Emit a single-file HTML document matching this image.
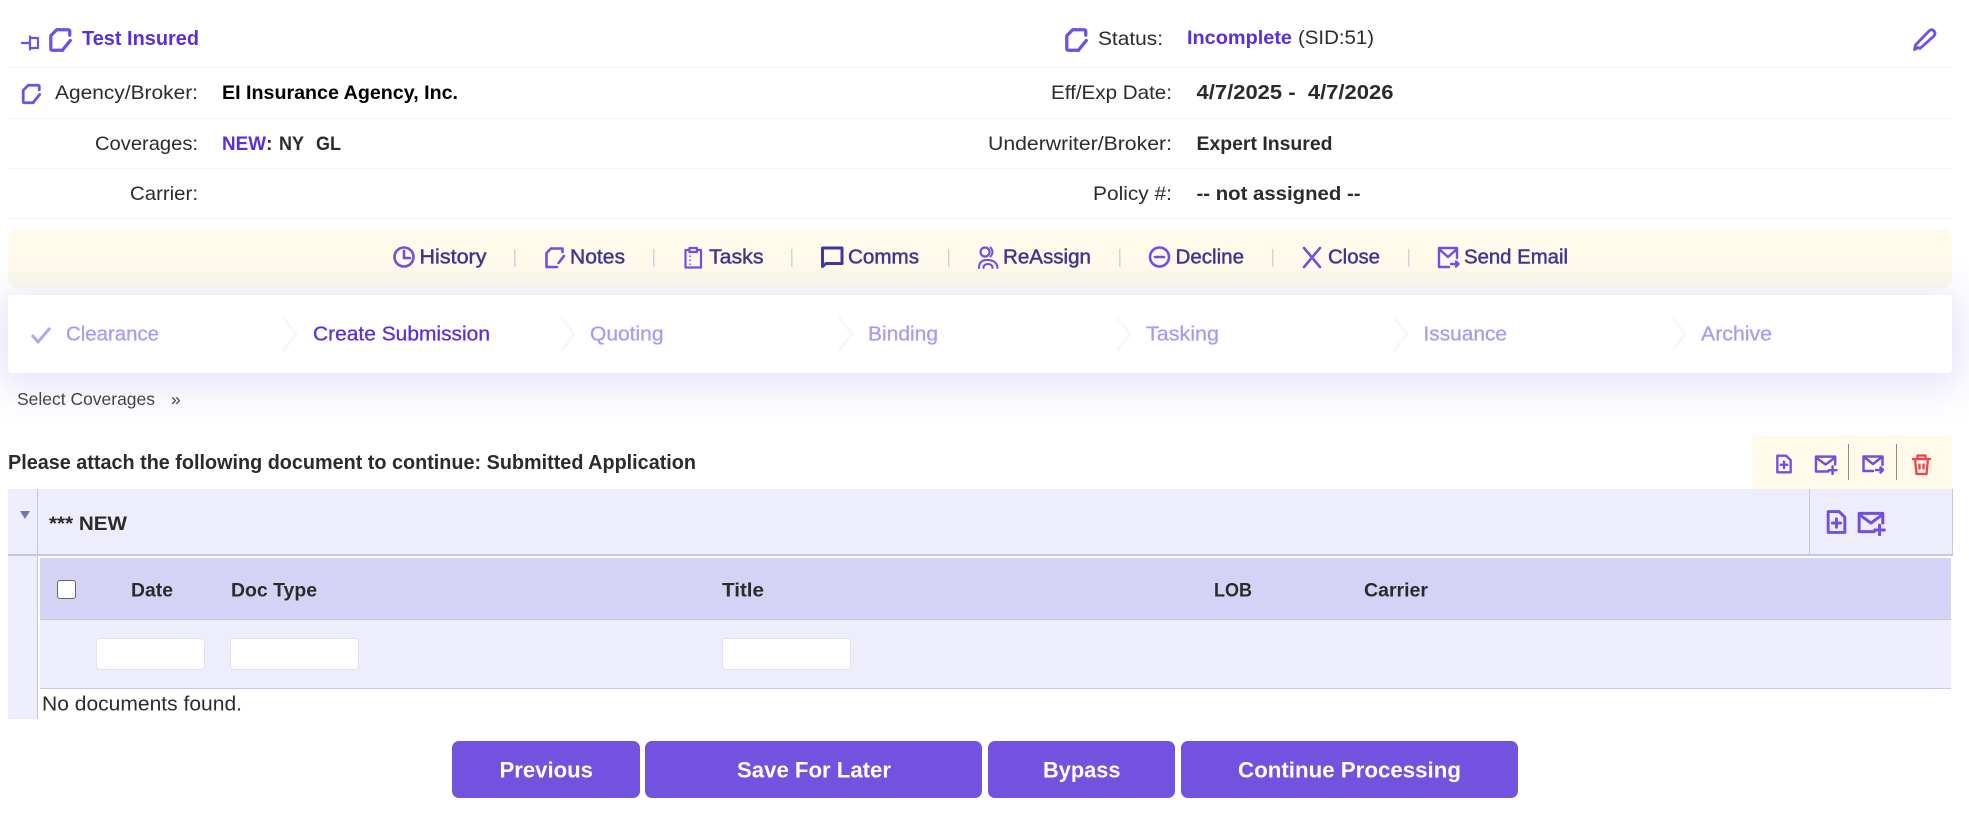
<!DOCTYPE html>
<html><head><meta charset="utf-8"><title>Submission</title>
<style>
html,body{margin:0;padding:0;background:#fff;}
body{width:1969px;height:833px;position:relative;overflow:hidden;font-family:"Liberation Sans",sans-serif;}
.b{position:absolute;box-sizing:border-box;}
svg{position:absolute;left:0;top:0;filter:blur(.3px);}
text{font-family:"Liberation Sans",sans-serif;font-size:19.5px;fill:#2b2b2b;}
.bd{font-weight:700}
.p{fill:#5a2fd8}
.n{fill:#3e358f;font-size:20.5px;stroke:#3e358f;stroke-width:.45px;}
.s{fill:#ab9bf0;font-size:20.5px;stroke:#ab9bf0;stroke-width:.3px;}
.k{fill:#000}
.i{fill:none;stroke:#6f50e2;stroke-width:2.6;stroke-linejoin:round;stroke-linecap:round;}
.w{fill:#fff;font-weight:700;font-size:22.5px;}
</style></head>
<body>
<div class="b" style="left:8px;top:67px;width:1944px;height:1px;background:#f3f3f3"></div>
<div class="b" style="left:8px;top:118px;width:1944px;height:1px;background:#f3f3f3"></div>
<div class="b" style="left:8px;top:168px;width:1944px;height:1px;background:#f3f3f3"></div>
<div class="b" style="left:8px;top:218px;width:1944px;height:1px;background:#f3f3f3"></div>

<div class="b" style="left:8px;top:295px;width:1944px;height:78px;background:#fff;border-radius:4px;box-shadow:0 6px 40px 8px rgba(120,115,225,.2)"></div>
<div class="b" style="left:8px;top:229px;width:1944px;height:59px;border-radius:10px;background:linear-gradient(#fffaea 0,#fffaea 50%,#f8f5ea 88%,#f2f1ee 100%)"></div>

<div class="b" style="left:1752px;top:436px;width:200px;height:53px;background:#fffaea;border-radius:4px 4px 0 0"></div>
<div class="b" style="left:8px;top:489px;width:1945px;height:67px;background:#eeedfc;border-bottom:2px solid #c8c6e6;border-right:1px solid #c8c6e6"></div>
<div class="b" style="left:8px;top:556px;width:30px;height:163px;background:#eeedfc"></div>
<div class="b" style="left:37px;top:489px;width:1px;height:230px;background:#c8c6e6"></div>
<div class="b" style="left:1809px;top:489px;width:1px;height:66px;background:#c8c6e6"></div>
<div class="b" style="left:40px;top:558px;width:1911px;height:62px;background:#d4d3f6;border-bottom:1px solid #c6c4ea"></div>
<div class="b" style="left:40px;top:620px;width:1911px;height:69px;background:#eeedfc;border-bottom:1px solid #c8c6e6"></div>
<div class="b" style="left:96px;top:638px;width:109px;height:32px;background:#fff;border:1px solid #e2e2ee;border-radius:4px"></div>
<div class="b" style="left:230px;top:638px;width:129px;height:32px;background:#fff;border:1px solid #e2e2ee;border-radius:4px"></div>
<div class="b" style="left:722px;top:638px;width:129px;height:32px;background:#fff;border:1px solid #e2e2ee;border-radius:4px"></div>
<div class="b" style="left:57px;top:580px;width:19px;height:19px;background:#fff;border:1.5px solid #666;border-radius:3px"></div>

<div class="b" style="left:452px;top:741px;width:188px;height:57px;background:#7352e0;border-radius:7px"></div>
<div class="b" style="left:645px;top:741px;width:337px;height:57px;background:#7352e0;border-radius:7px"></div>
<div class="b" style="left:988px;top:741px;width:187px;height:57px;background:#7352e0;border-radius:7px"></div>
<div class="b" style="left:1181px;top:741px;width:337px;height:57px;background:#7352e0;border-radius:7px"></div>

<svg width="1969" height="833" viewBox="0 0 1969 833">
<defs>
<symbol id="note" viewBox="0 0 24 24" overflow="visible"><path class="i" d="M9 2.500H19.500Q21 2.500 21 4V7.500M9 2.500L3.500 8V20Q3.500 21.500 5 21.500H14.500M21.500 12.500L15 20.500" style="stroke-width:3"/></symbol>
<symbol id="docp" viewBox="0 0 24 24"><path class="i" d="M4 2H14.500L20 7.500V22H4ZM12 9V17M8 13H16" style="stroke-width:2.800"/></symbol>
<symbol id="mailp" viewBox="0 0 27 24"><path class="i" d="M16 20H2V3H24V12M2 4L13 12L24 4M21 14V23M16.500 18.500H25.500" style="stroke-width:2.800"/></symbol>
<symbol id="maila" viewBox="0 0 22 20"><path class="i" d="M11 16H1.500V1.500H20.500V10M2 2L11 9L20 2M14 15H21M18.500 12.500L21 15L18.500 17.500" style="stroke-width:2.500"/></symbol>
</defs>

<!-- top icons -->
<path class="i" d="M22 43H30M30 38H38V48H30ZM30 36.500V49.500" style="stroke-width:2.200"/>
<use href="#note" x="47" y="27" width="26" height="26"/>
<use href="#note" x="20" y="83" width="22" height="22"/>
<use href="#note" x="1063" y="27" width="26" height="26"/>
<path class="i" d="M1918 47.500L1914.500 49.500L1915.500 45L1929 31Q1931.500 28.500 1934 31Q1936 33.500 1934 36L1920 48.500Z" style="stroke-width:2.800"/>

<!-- info rows -->
<text class="bd p" x="82" y="45" textLength="117" lengthAdjust="spacingAndGlyphs" style="font-size:20px">Test Insured</text>
<text x="55" y="99" textLength="143" lengthAdjust="spacingAndGlyphs">Agency/Broker:</text>
<text class="bd k" x="222" y="99" textLength="236" lengthAdjust="spacingAndGlyphs">EI Insurance Agency, Inc.</text>
<text x="95" y="150" textLength="103" lengthAdjust="spacingAndGlyphs">Coverages:</text>
<text class="bd p" x="222" y="150" textLength="44" lengthAdjust="spacingAndGlyphs">NEW</text>
<text class="bd" x="266" y="150">:</text>
<text class="bd" x="279" y="150" textLength="25" lengthAdjust="spacingAndGlyphs">NY</text>
<text class="bd" x="316" y="150" textLength="25" lengthAdjust="spacingAndGlyphs">GL</text>
<text x="130" y="200" textLength="68" lengthAdjust="spacingAndGlyphs">Carrier:</text>

<text x="1098" y="45" textLength="65" lengthAdjust="spacingAndGlyphs">Status:</text>
<text class="bd p" x="1187" y="44" textLength="105" lengthAdjust="spacingAndGlyphs">Incomplete</text>
<text x="1298" y="44" textLength="76" lengthAdjust="spacingAndGlyphs">(SID:51)</text>
<text x="1051" y="99" textLength="121" lengthAdjust="spacingAndGlyphs">Eff/Exp Date:</text>
<text class="bd" x="1196.500" y="99" textLength="197" lengthAdjust="spacingAndGlyphs" xml:space="preserve" style="font-size:20.500px">4/7/2025 -  4/7/2026</text>
<text x="988" y="150" textLength="184" lengthAdjust="spacingAndGlyphs">Underwriter/Broker:</text>
<text class="bd" x="1196.500" y="150" textLength="136" lengthAdjust="spacingAndGlyphs">Expert Insured</text>
<text x="1093" y="200" textLength="79" lengthAdjust="spacingAndGlyphs">Policy #:</text>
<text class="bd" x="1196.500" y="200" textLength="164" lengthAdjust="spacingAndGlyphs">-- not assigned --</text>

<!-- action bar -->
<circle class="i" cx="404" cy="257" r="9.500"/><path class="i" d="M404 251V258H410"/>
<path class="i" d="M551 248.500H562.500V252M551 248.500L546.500 253V267H557M564 256L558.500 263"/>
<path class="i" d="M689 250H685.500V267.500H701V250H697.500M689.500 248H697V252H689.500Z" style="stroke-width:2.200"/>
<path class="i" d="M690 256V256.500M690 260V260.500M690 264V264.500" style="stroke-width:1.500"/>
<path d="M822.500 248H842V263.500H826L822.500 266.500Z" fill="none" stroke="#3f38a4" stroke-width="3" stroke-linejoin="round"/>
<circle class="i" cx="985" cy="252" r="4.500" style="stroke-width:2.200"/>
<path class="i" d="M990.500 247.500Q994.500 252 990.500 256.500M979 268Q979 260 987 260Q997 260 997.500 268M983.500 268Q983.500 264 988 264Q992.500 264 992.500 268" style="stroke-width:2"/>
<circle class="i" cx="1159.500" cy="257" r="9.500"/><path class="i" d="M1155 257H1164"/>
<path class="i" d="M1304 248L1320 267M1320 248L1304 267"/>
<path class="i" d="M1449 267H1439V248H1457V258M1439 249L1448 257L1457 249M1451 264H1458.500M1456 261.500L1458.500 264L1456 266.500" style="stroke-width:2.400"/>
<g fill="#d3d3dc">
<rect x="514" y="249" width="1.500" height="18"/><rect x="653" y="249" width="1.500" height="18"/><rect x="791" y="249" width="1.500" height="18"/><rect x="948" y="249" width="1.500" height="18"/><rect x="1119" y="249" width="1.500" height="18"/><rect x="1272" y="249" width="1.500" height="18"/><rect x="1408" y="249" width="1.500" height="18"/>
</g>
<text class="n" x="419.500" y="263.500" textLength="67" lengthAdjust="spacingAndGlyphs">History</text>
<text class="n" x="570" y="263.500" textLength="55" lengthAdjust="spacingAndGlyphs">Notes</text>
<text class="n" x="709" y="263.500" textLength="54.500" lengthAdjust="spacingAndGlyphs">Tasks</text>
<text class="n" x="848" y="263.500" textLength="71" lengthAdjust="spacingAndGlyphs">Comms</text>
<text class="n" x="1003" y="263.500" textLength="88" lengthAdjust="spacingAndGlyphs">ReAssign</text>
<text class="n" x="1175.500" y="263.500" textLength="68.500" lengthAdjust="spacingAndGlyphs">Decline</text>
<text class="n" x="1328" y="263.500" textLength="52" lengthAdjust="spacingAndGlyphs">Close</text>
<text class="n" x="1464" y="263.500" textLength="104" lengthAdjust="spacingAndGlyphs">Send Email</text>

<!-- stepper -->
<path d="M32 335L38 342L50 328" fill="none" stroke="#b3a5f2" stroke-width="3"/>
<text class="s" x="66" y="340.500" textLength="93" lengthAdjust="spacingAndGlyphs">Clearance</text>
<text class="s" x="313" y="340.500" textLength="177" lengthAdjust="spacingAndGlyphs" style="fill:#5a2fd8;stroke:#5a2fd8">Create Submission</text>
<text class="s" x="590" y="340.500" textLength="73.500" lengthAdjust="spacingAndGlyphs">Quoting</text>
<text class="s" x="868" y="340.500" textLength="70" lengthAdjust="spacingAndGlyphs">Binding</text>
<text class="s" x="1146" y="340.500" textLength="73" lengthAdjust="spacingAndGlyphs">Tasking</text>
<text class="s" x="1423.500" y="340.500" textLength="83.500" lengthAdjust="spacingAndGlyphs">Issuance</text>
<text class="s" x="1701" y="340.500" textLength="71" lengthAdjust="spacingAndGlyphs">Archive</text>
<g fill="none" stroke="#f7f7f9" stroke-width="3">
<path d="M283 317L296 334L283 351"/><path d="M561 317L574 334L561 351"/><path d="M839 317L852 334L839 351"/><path d="M1117 317L1130 334L1117 351"/><path d="M1394 317L1407 334L1394 351"/><path d="M1672 317L1685 334L1672 351"/>
</g>

<text x="17" y="405" textLength="138" lengthAdjust="spacingAndGlyphs" style="font-size:17.500px;fill:#444">Select Coverages</text>
<text x="171" y="405" style="font-size:17.500px;fill:#444">»</text>

<text class="bd" x="8" y="469" textLength="688" lengthAdjust="spacingAndGlyphs" style="font-size:20px">Please attach the following document to continue: Submitted Application</text>

<!-- toolbar icons -->
<use href="#docp" x="1774" y="454" width="20" height="20"/>
<use href="#mailp" x="1814" y="454" width="24" height="21"/>
<use href="#maila" x="1862" y="455" width="22" height="20"/>
<rect x="1848" y="444" width="1" height="36" fill="#8a8a8a"/>
<rect x="1896" y="444" width="1" height="36" fill="#8a8a8a"/>
<path d="M1912 459H1931M1915 459L1916.500 474H1926.500L1928 459M1917.500 459V455.500H1925.500V459M1919.500 463.500V469.500M1923.500 463.500V469.500" fill="none" stroke="#f2404a" stroke-width="2.300" stroke-linejoin="round"/>
<use href="#docp" x="1824" y="509" width="25" height="26"/>
<use href="#mailp" x="1857" y="510" width="29" height="26"/>

<path d="M20 511H30L25 519Z" fill="#7076b4"/>
<text class="bd" x="49" y="530" textLength="78" lengthAdjust="spacingAndGlyphs">*** NEW</text>

<text class="bd" x="131" y="596.500" textLength="42" lengthAdjust="spacingAndGlyphs">Date</text>
<text class="bd" x="231" y="596.500" textLength="86" lengthAdjust="spacingAndGlyphs">Doc Type</text>
<text class="bd" x="722" y="596.500" textLength="42" lengthAdjust="spacingAndGlyphs">Title</text>
<text class="bd" x="1214" y="596.500" textLength="38" lengthAdjust="spacingAndGlyphs">LOB</text>
<text class="bd" x="1364" y="596.500" textLength="64" lengthAdjust="spacingAndGlyphs">Carrier</text>
<text x="42" y="710.500" textLength="200" lengthAdjust="spacingAndGlyphs" style="font-size:20.500px">No documents found.</text>

<text class="w" x="499.500" y="777.500" textLength="93.500" lengthAdjust="spacingAndGlyphs">Previous</text>
<text class="w" x="737" y="777.500" textLength="154" lengthAdjust="spacingAndGlyphs">Save For Later</text>
<text class="w" x="1043" y="777.500" textLength="77.500" lengthAdjust="spacingAndGlyphs">Bypass</text>
<text class="w" x="1238" y="777.500" textLength="223" lengthAdjust="spacingAndGlyphs">Continue Processing</text>
</svg>
</body></html>
